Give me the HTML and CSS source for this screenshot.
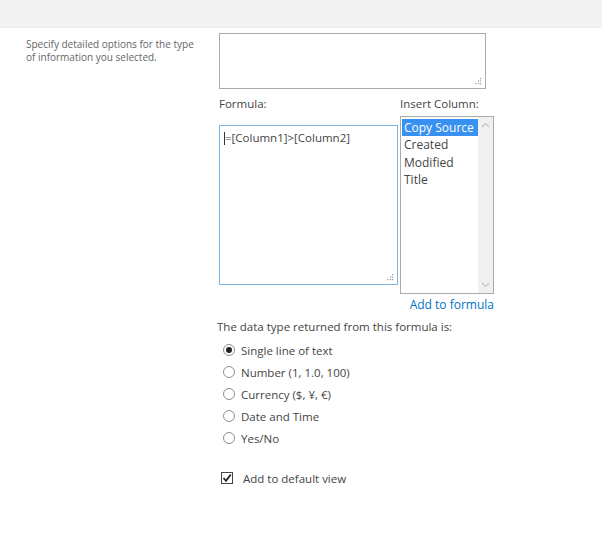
FILE: index.html
```html
<!DOCTYPE html>
<html>
<head>
<meta charset="utf-8">
<link rel="stylesheet" href="styles.css">
</head>
<body>
<div class="topbar"></div>
<div class="section">
  <div class="desc">Specify detailed options for the type<br>of information you selected.</div>
  <div class="main">
    <div class="box top-box">
      <svg class="grip" width="7" height="7" viewBox="0 0 7 7"><g fill="#9a9a9a"><rect x="5" y="0" width="1.2" height="1.2"/><rect x="3" y="2.5" width="1.2" height="1.2"/><rect x="5" y="2.5" width="1.2" height="1.2"/><rect x="0.5" y="5" width="1.2" height="1.2"/><rect x="3" y="5" width="1.2" height="1.2"/><rect x="5" y="5" width="1.2" height="1.2"/></g></svg>
    </div>
    <div class="formula-row">
      <div class="formula-col">
        <div class="label">Formula:</div>
        <div class="box formula-box">
          <div class="formula-text"><span class="caret"></span>=[Column1]&gt;[Column2]</div>
          <svg class="grip" width="7" height="7" viewBox="0 0 7 7"><g fill="#9a9a9a"><rect x="5" y="0" width="1.2" height="1.2"/><rect x="3" y="2.5" width="1.2" height="1.2"/><rect x="5" y="2.5" width="1.2" height="1.2"/><rect x="0.5" y="5" width="1.2" height="1.2"/><rect x="3" y="5" width="1.2" height="1.2"/><rect x="5" y="5" width="1.2" height="1.2"/></g></svg>
        </div>
      </div>
      <div class="insert-col">
        <div class="label">Insert Column:</div>
        <div class="listbox">
          <div class="items">
            <div class="item sel">Copy Source</div>
            <div class="item">Created</div>
            <div class="item">Modified</div>
            <div class="item">Title</div>
          </div>
          <div class="scroll">
            <svg width="9" height="6" viewBox="0 0 9 6"><path d="M1 5 L4.5 1.5 L8 5" fill="none" stroke="#c2c2c2" stroke-width="1.2"/></svg>
            <svg width="9" height="6" viewBox="0 0 9 6"><path d="M1 1 L4.5 4.5 L8 1" fill="none" stroke="#c2c2c2" stroke-width="1.2"/></svg>
          </div>
        </div>
        <div class="add-wrap"><a class="add">Add to formula</a></div>
      </div>
    </div>
    <div class="datatype">The data type returned from this formula is:</div>
    <div class="radios">
      <div class="radio-row"><span class="radio checked"></span><span>Single line of text</span></div>
      <div class="radio-row"><span class="radio"></span><span>Number (1, 1.0, 100)</span></div>
      <div class="radio-row"><span class="radio"></span><span>Currency ($, ¥, €)</span></div>
      <div class="radio-row"><span class="radio"></span><span>Date and Time</span></div>
      <div class="radio-row"><span class="radio"></span><span>Yes/No</span></div>
    </div>
    <div class="check-row">
      <span class="checkbox"><svg width="10" height="10" viewBox="0 0 10 10"><path d="M1.5 5 L4 7.8 L8.8 1.5" fill="none" stroke="#222" stroke-width="1.8"/></svg></span>
      <span>Add to default view</span>
    </div>
  </div>
</div>
</body>
</html>
```
FILE: styles.css
```css
html, body {
  margin: 0;
  padding: 0;
  background: #ffffff;
}
body {
  font-family: "Open Sans", "Noto Sans", sans-serif;
  font-size: 11.5px;
  color: #444444;
}
.topbar {
  height: 28px;
  background: #f2f2f2;
  border-bottom: 1px solid #ececec;
  box-sizing: border-box;
}
.section {
  display: flex;
  padding-top: 5px;
}
.desc {
  width: 219px;
  flex: none;
  box-sizing: border-box;
  padding-left: 26px;
  padding-top: 5px;
  font-size: 10px;
  line-height: 13px;
  color: #666666;
}
.main {
  display: flex;
  flex-direction: column;
}
.box {
  position: relative;
  border: 1px solid #ababab;
  box-sizing: border-box;
  background: #fff;
}
.top-box {
  width: 267px;
  height: 56px;
}
.grip {
  position: absolute;
  right: 3px;
  bottom: 3px;
}
.formula-row {
  display: flex;
  gap: 2px;
  margin-top: 7px;
}
.label {
  line-height: 16px;
  color: #444;
}
.formula-col {
  width: 179px;
}
.formula-box {
  margin-top: 13px;
  height: 160px;
  border-color: #7cb4e2;
}
.formula-text {
  padding: 4px 0 0 4px;
  line-height: 16px;
  color: #444;
  display: flex;
  align-items: center;
}
.caret {
  display: inline-block;
  width: 1px;
  height: 13px;
  background: #333;
}
.insert-col {
  width: 94px;
}
.listbox {
  margin-top: 4px;
  height: 178px;
  border: 1px solid #ababab;
  box-sizing: border-box;
  display: flex;
}
.items {
  flex: 1;
  padding: 2px 0 0 1px;
}
.item {
  line-height: 17.3px;
  height: 17.3px;
  padding-left: 2px;
  font-size: 12px;
  color: #444;
}
.item.sel {
  background: #3891f0;
  color: #fff;
}
.scroll {
  width: 15px;
  background: #f0f0f0;
  display: flex;
  flex-direction: column;
  justify-content: space-between;
  align-items: center;
  padding: 5px 0 5px;
}
.add-wrap {
  margin-top: 3px;
  text-align: right;
  line-height: 16px;
}
.add {
  color: #0072c6;
  font-size: 12px;
}
.datatype {
  margin-top: 6px;
  margin-left: -2px;
  line-height: 16px;
}
.radios {
  margin-top: 4px;
  margin-left: 4px;
}
.radio-row {
  height: 22px;
  display: flex;
  align-items: center;
  gap: 6px;
}
.radio {
  width: 12px;
  height: 12px;
  box-sizing: border-box;
  border: 1px solid #8f8f8f;
  border-radius: 50%;
  display: flex;
  align-items: center;
  justify-content: center;
}
.radio.checked::after {
  content: "";
  width: 6px;
  height: 6px;
  border-radius: 50%;
  background: #222;
}
.check-row {
  margin-top: 18px;
  margin-left: 2px;
  height: 22px;
  display: flex;
  align-items: center;
  gap: 10px;
}
.checkbox {
  width: 12px;
  height: 12px;
  box-sizing: border-box;
  border: 1px solid #444;
  display: flex;
  align-items: center;
  justify-content: center;
}
```
